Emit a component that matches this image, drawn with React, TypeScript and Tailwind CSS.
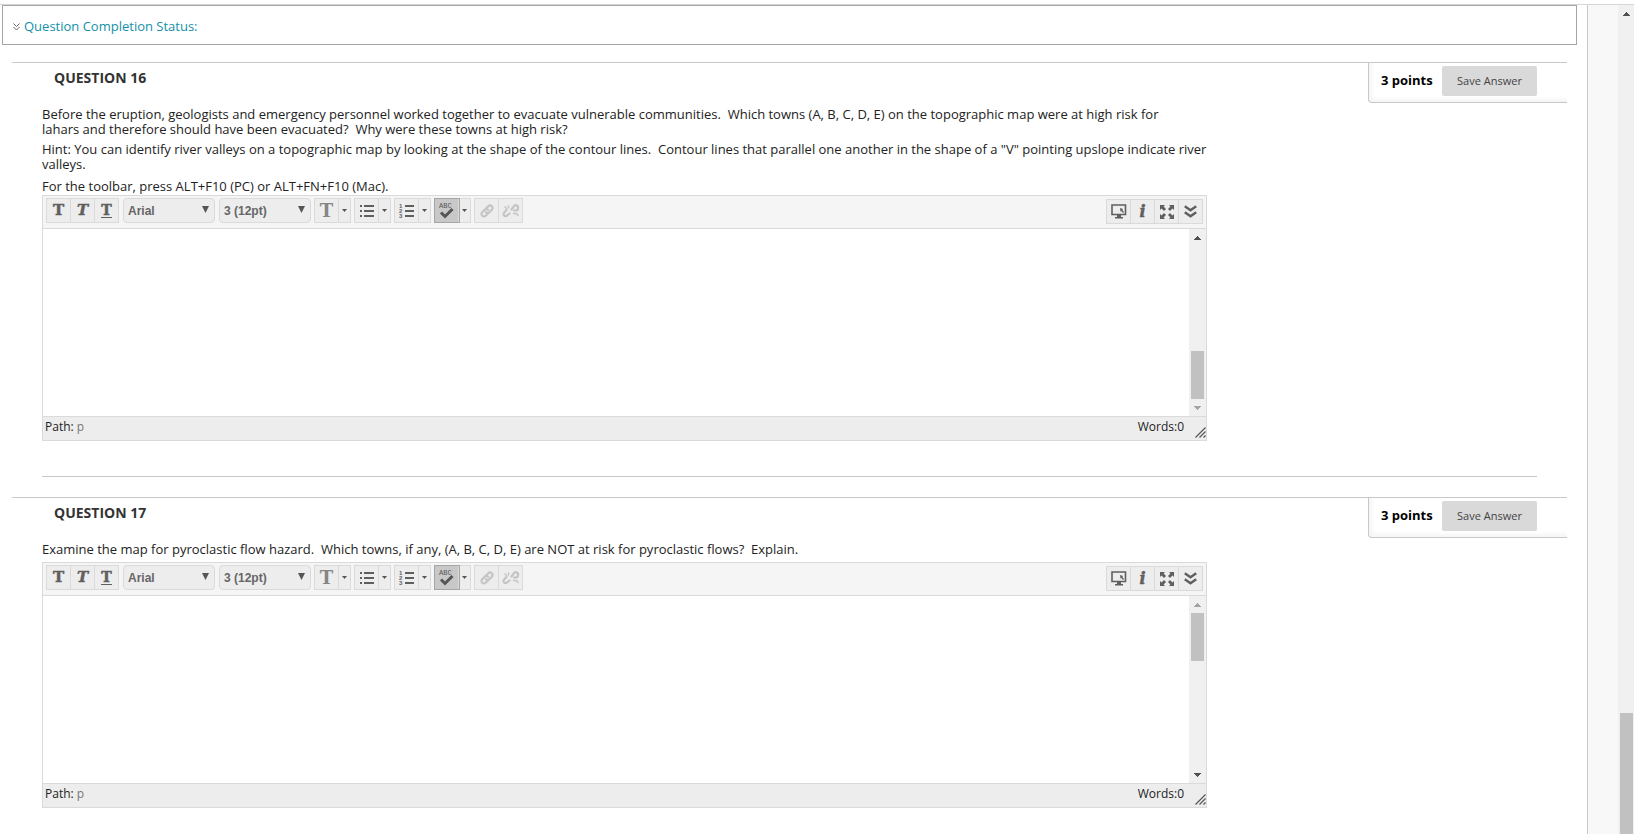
import type { ReactNode } from "react";

const ICON = "#5f5f5f";

function CaretUp({ muted = false }: { muted?: boolean }) {
  return (
    <svg width="7" height="4" viewBox="0 0 7 4" shapeRendering="crispEdges" aria-hidden="true">
      <path d="M3 0h1v1h1v1h1v1h1v1H0V3h1V2h1V1h1z" fill={muted ? "#a3a3a3" : "#505050"} />
    </svg>
  );
}

function CaretDown({ muted = false }: { muted?: boolean }) {
  return (
    <svg width="7" height="4" viewBox="0 0 7 4" shapeRendering="crispEdges" aria-hidden="true">
      <path d="M0 0h7v1H6v1H5v1H4v1H3V3H2V2H1V1H0z" fill={muted ? "#a3a3a3" : "#505050"} />
    </svg>
  );
}

function MenuArrow() {
  return (
    <svg width="5" height="3" viewBox="0 0 5 3" aria-hidden="true">
      <path d="M0 0h5L2.500 3z" fill="#555" />
    </svg>
  );
}

function BulletIcon() {
  return (
    <svg width="14" height="14" viewBox="0 0 14 14" fill={ICON} aria-hidden="true">
      <path d="M0 1h2v2H0zM0 6h2v2H0zM0 11h2v2H0zM4 1h10v2H4zM4 6h10v2H4zM4 11h10v2H4z" />
    </svg>
  );
}

function NumberIcon() {
  return (
    <svg width="16" height="16" viewBox="0 0 16 16" fill={ICON} aria-hidden="true">
      <path d="M6 2h9v2H6zM6 7h9v2H6zM6 12h9v2H6z" />
      <g fontFamily="Liberation Sans, sans-serif" fontSize="6" fontWeight="700">
        <text x="0" y="5">1</text>
        <text x="0" y="10">2</text>
        <text x="0" y="15">3</text>
      </g>
    </svg>
  );
}

function SpellIcon() {
  return (
    <svg width="18" height="20" viewBox="0 0 18 20" aria-hidden="true">
      <text x="1" y="7" fontFamily="Liberation Mono, monospace" fontSize="7" fill="#555">ABC</text>
      <path d="M3 11.500l4 4L14.500 8" fill="none" stroke="#555" strokeWidth="3" />
    </svg>
  );
}

function LinkIcon() {
  return (
    <svg width="14" height="14" viewBox="0 0 14 14" fill="none" stroke="#c4c4c4" strokeWidth="2.200" strokeLinecap="round" aria-hidden="true">
      <path d="M6 4.500l2.300-2.300a2.400 2.400 0 0 1 3.500 3.500L9.300 8.200a2.400 2.400 0 0 1-3.400 0" />
      <path d="M8 9.500l-2.300 2.300a2.400 2.400 0 0 1-3.500-3.500l2.500-2.500a2.400 2.400 0 0 1 3.400 0" />
    </svg>
  );
}

function UnlinkIcon() {
  return (
    <svg width="18" height="14" viewBox="0 0 18 14" fill="none" stroke="#c4c4c4" strokeWidth="2.200" strokeLinecap="round" aria-hidden="true">
      <path d="M4.500 6L2.200 8.500a2 2 0 0 0 2.800 3L7.500 9.500" />
      <path d="M9.500 5.500l2-2.500a2.200 2.200 0 0 1 4.500 1.200q0 1.800-2 2.300h-2" />
      <path d="M6.500 2v2M3 3l1.500 1.500M11.500 9.500h3l1.500 2" strokeWidth="1.500" />
    </svg>
  );
}

function MonitorIcon() {
  return (
    <svg width="16" height="15" viewBox="0 0 16 15" aria-hidden="true">
      <path d="M1 1h13.500v9.500H1z" fill="none" stroke={ICON} strokeWidth="1.600" />
      <path d="M6 11h4v2h2v1.500H4V13h2zM9 4l3 1-.7.900L13 8l-1 .9-1.600-2-.9.900z" fill={ICON} />
    </svg>
  );
}

function ExpandIcon() {
  return (
    <svg width="14" height="14" viewBox="0 0 14 14" fill={ICON} aria-hidden="true">
      <path d="M0 0h5L3.600 1.600 6 4 4 6 1.600 3.600 0 5zM14 0v5l-1.600-1.400L10 6 8 4l2.400-2.400L9 0zM0 14V9l1.600 1.400L4 8l2 2-2.400 2.400L5 14zM14 14H9l1.400-1.600L8 10l2-2 2.400 2.400L14 9z" />
    </svg>
  );
}

function ChevronsIcon() {
  return (
    <svg width="13" height="13" viewBox="0 0 13 13" fill="none" stroke={ICON} strokeWidth="2.400" aria-hidden="true">
      <path d="M.8 1.200l5.700 4 5.700-4M.8 7.200l5.700 4 5.700-4" />
    </svg>
  );
}

function ResizeGrip() {
  return (
    <svg width="11" height="11" viewBox="0 0 11 11" stroke="#555" strokeWidth="1.200" aria-hidden="true">
      <path d="M.5 10.500l10-10M4.500 10.500l6-6M8.500 10.500l2-2" />
    </svg>
  );
}

function ToolGroup({ children }: { children: ReactNode }) {
  return <div className="flex h-[25px] border-y border-l border-[#dadada] bg-[#ededed]">{children}</div>;
}

function Tool({ label, active = false, disabled = false, children }: { label: string; active?: boolean; disabled?: boolean; children: ReactNode }) {
  return (
    <button
      type="button"
      aria-label={label}
      disabled={disabled}
      className={`flex w-6 items-center justify-center border-r border-[#dadada] ${active ? "bg-[#c8c8c8] outline outline-[#a5a5a5]" : ""}`}
    >
      {children}
    </button>
  );
}

function MenuTool({ label }: { label: string }) {
  return (
    <button type="button" aria-label={label} className="flex w-3 items-center justify-center border-r border-[#dadada]">
      <MenuArrow />
    </button>
  );
}

const LETTER = "font-['DejaVu_Serif',serif] font-bold leading-none text-[#5f5f5f] [-webkit-text-stroke:0.5px_#5f5f5f]";

function Picker({ label, value }: { label: string; value: string }) {
  return (
    <div className="relative">
      <select
        aria-label={label}
        className="block h-[25px] w-[92px] appearance-none rounded border border-[#dadada] bg-[#ededed] pl-1 font-['Liberation_Sans',sans-serif] text-xs font-bold text-[#666]"
      >
        <option>{value}</option>
      </select>
      <svg className="pointer-events-none absolute top-2 right-1.5" width="7" height="7" viewBox="0 0 7 7" aria-hidden="true">
        <path d="M0 0h7L3.500 7z" fill="#555" />
      </svg>
    </div>
  );
}

function Editor({ scrolled, label }: { scrolled: boolean; label: string }) {
  return (
    <div className="w-[1165px] max-w-full border border-[#dadada]">
      <div className="flex h-[33px] items-start justify-between border-b border-[#dadada] bg-[#f5f5f5] pt-[2px] pr-[3px] pl-[3px]">
        <div className="flex gap-[3px]">
          <ToolGroup>
            <Tool label="Bold"><span className={`${LETTER} text-[15px]`}>T</span></Tool>
            <Tool label="Italic"><span className={`${LETTER} text-[15px] italic`}>T</span></Tool>
            <Tool label="Underline"><span className={`${LETTER} border-b border-[#5f5f5f] text-sm`}>T</span></Tool>
          </ToolGroup>
          <div className="flex gap-1 pl-px">
            <Picker label="Font" value="Arial" />
            <Picker label="Size" value="3 (12pt)" />
          </div>
          <ToolGroup>
            <Tool label="Text color"><span className="font-['DejaVu_Serif',serif] text-[18px] leading-none font-bold text-[#858585]">T</span></Tool>
            <MenuTool label="Choose text color" />
          </ToolGroup>
          <ToolGroup>
            <Tool label="Bulleted list"><BulletIcon /></Tool>
            <MenuTool label="Bulleted list styles" />
          </ToolGroup>
          <ToolGroup>
            <Tool label="Numbered list"><NumberIcon /></Tool>
            <MenuTool label="Numbered list styles" />
          </ToolGroup>
          <ToolGroup>
            <Tool label="Spell check" active><SpellIcon /></Tool>
            <MenuTool label="Spell check languages" />
          </ToolGroup>
          <ToolGroup>
            <Tool label="Insert link" disabled><LinkIcon /></Tool>
            <Tool label="Remove link" disabled><UnlinkIcon /></Tool>
          </ToolGroup>
        </div>
        <div className="pt-px">
          <ToolGroup>
            <Tool label="Preview"><MonitorIcon /></Tool>
            <Tool label="Help"><span className={`${LETTER} text-base italic`}>i</span></Tool>
            <Tool label="Full screen"><ExpandIcon /></Tool>
            <Tool label="More tools"><ChevronsIcon /></Tool>
          </ToolGroup>
        </div>
      </div>
      <div className="flex h-[187px]">
        <textarea aria-label={label} className="grow resize-none overflow-hidden p-2 outline-none" />
        <div className="flex w-[17px] flex-col items-center bg-[#f0f0f0]">
          <div className="flex h-[17px] items-center"><CaretUp muted={!scrolled} /></div>
          <div className={`flex grow flex-col ${scrolled ? "justify-end" : "justify-start"}`}>
            <div className="h-12 w-[13px] bg-[#c1c1c1]" />
          </div>
          <div className="flex h-[17px] items-center"><CaretDown muted={scrolled} /></div>
        </div>
      </div>
      <div className="flex h-6 justify-between border-t border-[#dadada] bg-[#ededed] pl-[2px] text-xs leading-5 text-[#222]">
        <div>Path: <span className="text-[#777]">p</span></div>
        <div className="flex gap-[11px]">
          <span>Words:0</span>
          <span className="self-end pb-[2px]"><ResizeGrip /></span>
        </div>
      </div>
    </div>
  );
}

function Question({ number, scrolled, children }: { number: number; scrolled: boolean; children: ReactNode }) {
  return (
    <section className="mr-[20px] ml-[12px] border-t border-[#c8c8c8]">
      <div className="flex h-10 justify-between">
        <h3 className="pt-[5px] pl-[42px] text-sm leading-5 font-bold text-[#333]">QUESTION {number}</h3>
        <div className="flex w-[199px] items-start rounded-bl border-b border-l border-[#c8c8c8] pt-[3px] pl-[12px] shadow-[inset_3px_-3px_4px_#f5f5f5]">
          <span className="w-[61px] text-[13px] leading-7 font-bold text-black">3 points</span>
          <button type="button" className="h-[30px] w-[95px] rounded-xs bg-[#d9d9d9] text-[11px] text-[#444]">Save Answer</button>
        </div>
      </div>
      <div className="mr-[30px] ml-[30px] pt-[4px] text-[13px] leading-[15px] text-[#222]">
        {children}
        <Editor scrolled={scrolled} label={`Answer to question ${number}`} />
      </div>
    </section>
  );
}

export default function App() {
  return (
    <div className="flex min-h-screen flex-col bg-white pt-1 font-['Open_Sans','Noto_Sans',sans-serif]">
      <div className="flex grow border-t border-[#d6d6da]">
        <main className="grow border-r border-[#c8c8c8]">
          <div className="mr-[10px] ml-[2px] flex h-10 items-center gap-1 border border-[#a5a5a5] pt-[3px] pl-[10px]">
            <svg width="7" height="8" viewBox="0 0 7 8" fill="none" stroke="#666" aria-hidden="true">
              <path d="M.5.500l3 3 3-3M.5 4l3 3 3-3" />
            </svg>
            <a href="#status" className="text-[13px] text-[#1490a8]">Question Completion Status:</a>
          </div>
          <div className="h-[17px]" />
          <Question number={16} scrolled>
            <div className="w-[1165px] max-w-full pb-px">
              <p className="pr-[30px]">
                Before the eruption, geologists and emergency personnel worked together to evacuate vulnerable communities.{"\u00a0 "}Which towns (A, B, C, D, E) on the topographic map were at high risk for lahars and therefore should have been evacuated?{"\u00a0 "}Why were these towns at high risk?
              </p>
              <p className="pt-[5px]">
                Hint: You can identify river valleys on a topographic map by looking at the shape of the contour lines.{"\u00a0 "}Contour lines that parallel one another in the shape of a "V" pointing upslope indicate river valleys.
              </p>
              <p className="pt-[7px]">For the toolbar, press ALT+F10 (PC) or ALT+FN+F10 (Mac).</p>
            </div>
          </Question>
          <div className="mt-[35px] mr-[50px] mb-[20px] ml-[42px] border-t border-[#c8c8c8]" />
          <Question number={17} scrolled={false}>
            <p className="pb-[5px]">
              Examine the map for pyroclastic flow hazard.{"\u00a0 "}Which towns, if any, (A, B, C, D, E) are NOT at risk for pyroclastic flows?{"\u00a0 "}Explain.
            </p>
          </Question>
        </main>
        <div className="w-[30px] shrink-0 bg-[#f8f8f8]" />
        <div className="flex w-4 shrink-0 flex-col items-center bg-[#f0f0f0]">
          <div className="flex h-[17px] items-center"><CaretUp /></div>
          <div className="grow" />
          <div className="h-[121px] w-[13px] bg-[#c1c1c1]" />
        </div>
      </div>
    </div>
  );
}
